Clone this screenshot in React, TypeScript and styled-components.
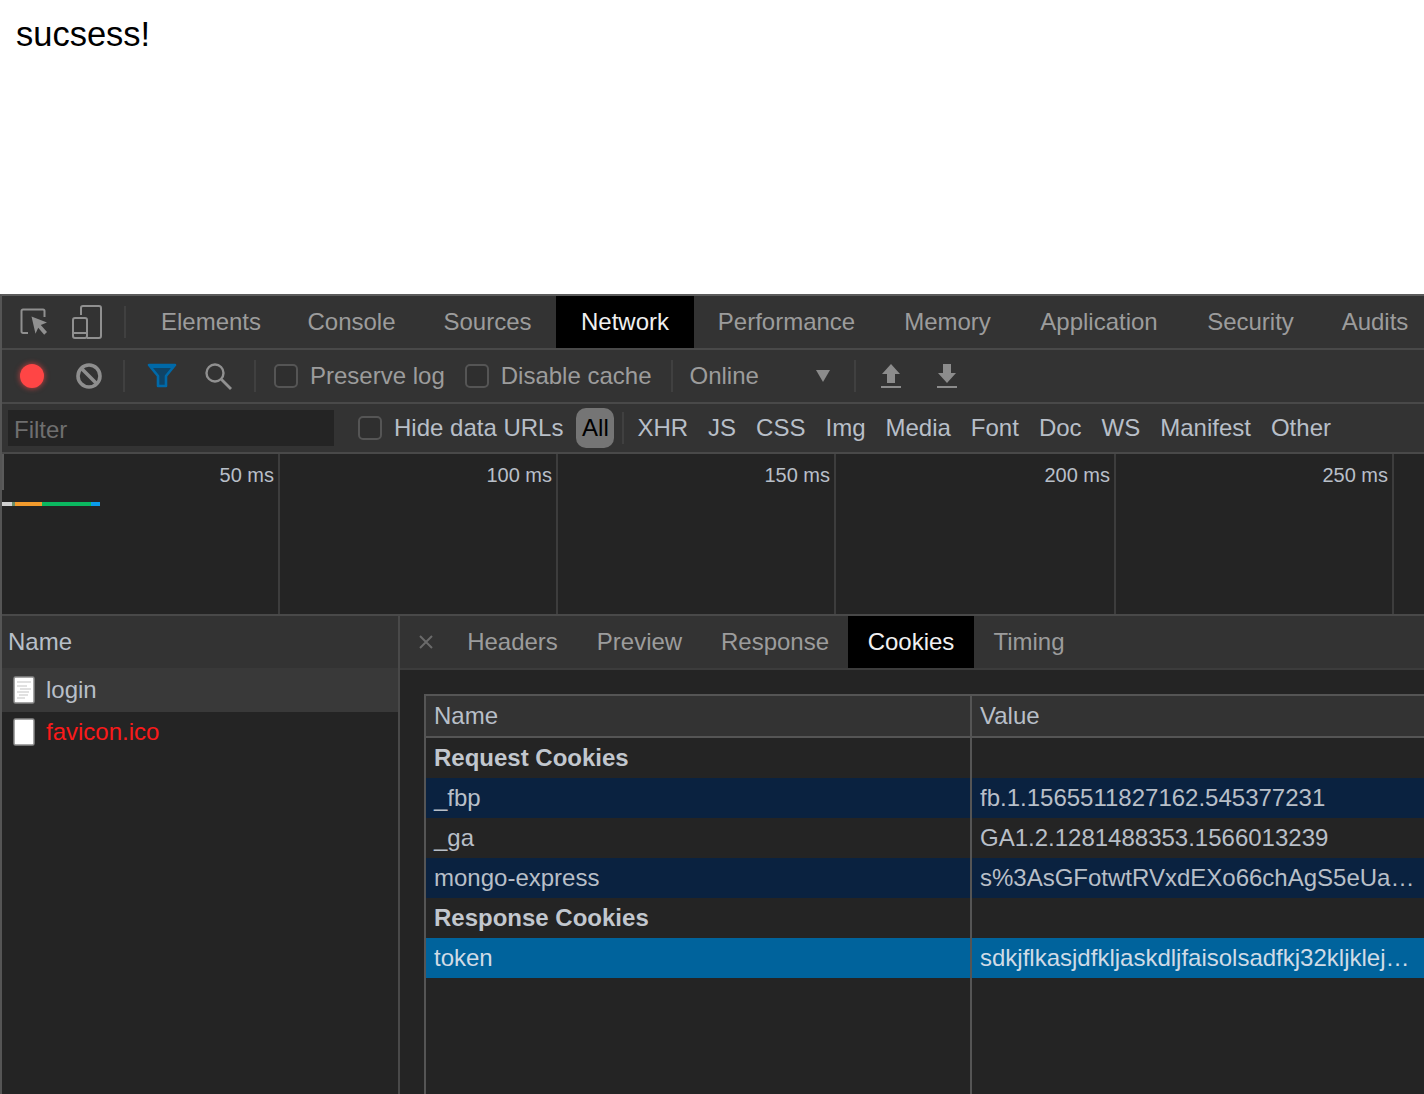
import React from 'react';
import styled, { createGlobalStyle } from 'styled-components';

const GlobalStyle = createGlobalStyle`
  html, body {
    margin: 0;
    height: 1094px;
    overflow: hidden;
    background: #fff;
    font-family: "Liberation Sans", Arial, sans-serif;
  }
  * { box-sizing: border-box; }
`;

const topTabs = [
  { label: 'Elements', width: 146 },
  { label: 'Console', width: 135 },
  { label: 'Sources', width: 137 },
  { label: 'Network', width: 138 },
  { label: 'Performance', width: 185 },
  { label: 'Memory', width: 137 },
  { label: 'Application', width: 166 },
  { label: 'Security', width: 137 },
  { label: 'Audits', width: 112 },
];
const filterTypes = ['XHR', 'JS', 'CSS', 'Img', 'Media', 'Font', 'Doc', 'WS', 'Manifest', 'Other'];
const gridMarks = [
  { label: '50 ms', width: 278 },
  { label: '100 ms', width: 278 },
  { label: '150 ms', width: 278 },
  { label: '200 ms', width: 280 },
  { label: '250 ms', width: 278 },
];
const barParts = [
  { color: '#d0d0d0', width: 10 },
  { color: '#6b8f6b', width: 3 },
  { color: '#f29b2d', width: 27 },
  { color: '#0bb860', width: 49 },
  { color: '#0a9bea', width: 9 },
];
const detailTabs = [
  { label: 'Headers', width: 129 },
  { label: 'Preview', width: 125 },
  { label: 'Response', width: 146 },
  { label: 'Cookies', width: 126 },
  { label: 'Timing', width: 110 },
];
const cookieRows = [
  { name: 'Request Cookies', value: '', kind: 'group' },
  { name: '_fbp', value: 'fb.1.1565511827162.545377231', kind: 'dim' },
  { name: '_ga', value: 'GA1.2.1281488353.1566013239', kind: 'plain' },
  { name: 'mongo-express', value: 's%3AsGFotwtRVxdEXo66chAgS5eUa9xkQm2LpTz7vNc4', kind: 'dim' },
  { name: 'Response Cookies', value: '', kind: 'group' },
  { name: 'token', value: 'sdkjflkasjdfkljaskdljfaisolsadfkj32kljklejwlkqjel', kind: 'selected' },
];

const Page = styled.div`
  height: 1094px;
  display: flex;
  flex-direction: column;
`;

const Greeting = styled.div`
  height: 294px;
  padding: 14px 16px 0;
  font-size: 34.5px;
  line-height: 40px;
  color: #000;
`;

const DevTools = styled.div`
  flex: 1;
  min-height: 0;
  display: flex;
  flex-direction: column;
  background: #242424;
  border-top: 2px solid #5c5c5c;
  border-left: 2px solid #555;
  font-size: 24px;
  color: #b8bfc8;
  overflow: hidden;
`;

const TabBar = styled.div`
  height: 54px;
  flex: none;
  display: flex;
  background: #333;
  border-bottom: 2px solid #494949;
`;

const ToolIcons = styled.div`
  width: 136px;
  flex: none;
  display: flex;
  align-items: center;
  padding-left: 18px;
`;

const Separator = styled.span<{ $left?: number }>`
  width: 2px;
  height: 32px;
  flex: none;
  background: #404040;
  margin-left: ${(p) => p.$left ?? 0}px;
`;

const Tab = styled.div<{ $active?: boolean; $width: number }>`
  width: ${(p) => p.$width}px;
  height: 52px;
  flex: none;
  line-height: 52px;
  text-align: center;
  white-space: nowrap;
  background: ${(p) => (p.$active ? '#000' : 'transparent')};
  color: ${(p) => (p.$active ? '#f0f0f0' : '#9c9c9c')};
`;

const Toolbar = styled.div`
  height: 54px;
  flex: none;
  display: flex;
  align-items: center;
  background: #333;
  border-bottom: 2px solid #494949;
`;

const RecordDot = styled.span`
  width: 24px;
  height: 24px;
  flex: none;
  margin-left: 18px;
  border-radius: 50%;
  background: #ff4545;
  box-shadow: 0 0 5px 1px rgba(255, 70, 70, 0.55);
`;

const Checkbox = styled.span<{ $left: number }>`
  width: 24px;
  height: 24px;
  flex: none;
  margin-left: ${(p) => p.$left}px;
  margin-right: 12px;
  border: 2px solid #555;
  border-radius: 5px;
  background: #2f2f2f;
`;

const ToolLabel = styled.span<{ $bright?: boolean }>`
  white-space: nowrap;
  color: ${(p) => (p.$bright ? '#b8bfc8' : '#9c9c9c')};
`;

const ThrottleSelect = styled.span`
  width: 141px;
  flex: none;
  display: flex;
  align-items: center;
  justify-content: space-between;
  margin-left: 16px;
  color: #9c9c9c;
`;

const FilterRow = styled.div`
  height: 50px;
  flex: none;
  display: flex;
  align-items: center;
  padding-left: 6px;
  background: #333;
  border-bottom: 2px solid #494949;
`;

const FilterInput = styled.div`
  width: 326px;
  height: 36px;
  flex: none;
  padding-left: 6px;
  line-height: 40px;
  background: #242424;
  color: #6f6f6f;
`;

const AllPill = styled.span`
  width: 38px;
  height: 40px;
  flex: none;
  margin-left: 13px;
  margin-right: 8px;
  border-radius: 10px;
  background: #757575;
  color: #000;
  text-align: center;
  line-height: 40px;
`;

const FilterTypes = styled.div`
  display: flex;
  gap: 20px;
  margin-left: 13px;
  color: #b8bfc8;
`;

const Timeline = styled.div`
  height: 162px;
  flex: none;
  border-bottom: 2px solid #494949;
  position: relative;
  display: flex;
`;

const GridColumn = styled.div<{ $width: number }>`
  width: ${(p) => p.$width}px;
  flex: none;
  height: 160px;
  padding: 9px 4px 0 0;
  border-right: 2px solid #3d3d3d;
  text-align: right;
  font-size: 20px;
  line-height: 24px;
  color: #b8bfc8;
`;

const ScrubHandle = styled.span`
  position: absolute;
  left: 0;
  top: 0;
  width: 2px;
  height: 36px;
  background: #5a5a5a;
`;

const TimingBar = styled.div`
  position: absolute;
  left: 0;
  top: 48px;
  display: flex;
  height: 4px;
`;

const BarPart = styled.span<{ $color: string; $width: number }>`
  width: ${(p) => p.$width}px;
  background: ${(p) => p.$color};
`;

const Split = styled.div`
  flex: 1;
  min-height: 0;
  display: flex;
`;

const NamePanel = styled.div`
  width: 398px;
  flex: none;
  border-right: 2px solid #494949;
`;

const NameHeader = styled.div`
  height: 52px;
  padding-left: 6px;
  line-height: 52px;
  background: #333;
`;

const RequestRow = styled.div<{ $selected?: boolean; $failed?: boolean }>`
  height: ${(p) => (p.$selected ? 44 : 40)}px;
  display: flex;
  align-items: center;
  gap: 11px;
  padding-left: 11px;
  background: ${(p) => (p.$selected ? '#393939' : 'transparent')};
  color: ${(p) => (p.$failed ? '#fb1a1a' : '#b8bfc8')};
`;

const DetailPanel = styled.div`
  flex: 1;
  min-width: 0;
  display: flex;
  flex-direction: column;
`;

const DetailTabs = styled.div`
  height: 54px;
  flex: none;
  display: flex;
  align-items: flex-start;
  background: #333;
  border-bottom: 2px solid #3c3c3c;
`;

const CloseMark = styled.span`
  width: 48px;
  height: 52px;
  flex: none;
  display: flex;
  align-items: center;
  padding-left: 19px;
`;

const DetailTab = styled.div<{ $active?: boolean; $width: number }>`
  width: ${(p) => p.$width}px;
  height: 52px;
  flex: none;
  line-height: 52px;
  text-align: center;
  background: ${(p) => (p.$active ? '#000' : 'transparent')};
  color: ${(p) => (p.$active ? '#f0f0f0' : '#9c9c9c')};
`;

const TableWrap = styled.div`
  flex: 1;
  min-height: 0;
  padding: 24px 0 0 24px;
`;

const CookieTable = styled.div`
  height: 100%;
  border-top: 2px solid #555;
  border-left: 2px solid #555;
  display: flex;
  flex-direction: column;
`;

const HeaderRow = styled.div`
  height: 42px;
  flex: none;
  display: grid;
  grid-template-columns: 546px 1fr;
  background: #333;
  border-bottom: 2px solid #555;
  line-height: 40px;
`;

const CookieRow = styled.div<{ $kind: string }>`
  height: 40px;
  flex: none;
  display: grid;
  grid-template-columns: 546px 1fr;
  line-height: 40px;
  font-weight: ${(p) => (p.$kind === 'group' ? 700 : 400)};
  background: ${(p) =>
    p.$kind === 'dim' ? '#0a2240' : p.$kind === 'selected' ? '#00639c' : 'transparent'};
  color: ${(p) => (p.$kind === 'selected' ? '#d0dbe6' : p.$kind === 'group' ? '#c2c7ce' : '#b8bfc8')};
`;

const NameCell = styled.div`
  padding-left: 8px;
  white-space: nowrap;
  border-right: 2px solid #555;
  overflow: hidden;
`;

const ValueCell = styled.div`
  min-width: 0;
  padding: 0 8px;
  white-space: nowrap;
  overflow: hidden;
  text-overflow: ellipsis;
`;

const TableFiller = styled.div`
  flex: 1;
  width: 546px;
  border-right: 2px solid #555;
`;

const Inspector = () => (
  <svg width="30" height="28" viewBox="0 0 30 28" fill="none">
    <path d="M8 25H3a1.500 1.500 0 0 1-1.500-1.500V3A1.500 1.500 0 0 1 3 1.500h20A1.500 1.500 0 0 1 24.500 3v6" stroke="#909090" strokeWidth="2" />
    <path d="M11.500 8.500 27 14.500l-6.200 2.600 6.200 7-2.800 2.600-6-7-2.700 6z" fill="#909090" />
  </svg>
);

const DeviceToggle = () => (
  <svg width="30" height="34" viewBox="0 0 30 34" fill="none" style={{ marginLeft: 22 }}>
    <path d="M9 10V3a2 2 0 0 1 2-2h16a2 2 0 0 1 2 2v28a2 2 0 0 1-2 2H15" stroke="#909090" strokeWidth="2" />
    <rect x="1" y="13" width="14" height="20" rx="2" stroke="#909090" strokeWidth="2" />
    <path d="M1 28h14" stroke="#909090" strokeWidth="2" />
  </svg>
);

const ClearIcon = () => (
  <svg width="28" height="28" viewBox="0 0 28 28" fill="none" style={{ marginLeft: 31 }}>
    <circle cx="14" cy="14" r="11" stroke="#8e8e8e" strokeWidth="3.600" />
    <path d="M6.500 6.500 21.500 21.500" stroke="#8e8e8e" strokeWidth="3.600" />
  </svg>
);

const FunnelIcon = () => (
  <svg width="30" height="26" viewBox="0 0 30 26" fill="none" style={{ marginLeft: 22 }}>
    <path d="M2 2h26l-9 11v10h-8V13z" fill="#0f4467" stroke="#0069a8" strokeWidth="2.600" strokeLinejoin="round" />
    <path d="M2 2h26l-2.500 3h-21z" fill="#0069a8" />
  </svg>
);

const SearchIcon = () => (
  <svg width="30" height="30" viewBox="0 0 30 30" fill="none" style={{ marginLeft: 26 }}>
    <circle cx="12" cy="12" r="8.500" stroke="#909090" strokeWidth="2.400" />
    <path d="M18.500 18.500 28 28" stroke="#909090" strokeWidth="2.800" />
  </svg>
);

const SelectArrow = () => (
  <svg width="14" height="12" viewBox="0 0 14 12">
    <path d="M0 0h14L7 12z" fill="#8c8c8c" />
  </svg>
);

const UploadIcon = () => (
  <svg width="20" height="26" viewBox="0 0 20 26" style={{ marginLeft: 25 }}>
    <path d="M10 1 19 11H14V20H6V11H1z" fill="#8c8c8c" />
    <path d="M0 23h20v2H0z" fill="#8c8c8c" />
  </svg>
);

const DownloadIcon = () => (
  <svg width="20" height="26" viewBox="0 0 20 26" style={{ marginLeft: 36 }}>
    <path d="M6 1h8V10H19L10 20 1 10H6z" fill="#8c8c8c" />
    <path d="M0 23h20v2H0z" fill="#8c8c8c" />
  </svg>
);

const FileIcon = ({ lines }: { lines?: boolean }) => (
  <svg width="22" height="28" viewBox="0 0 22 28">
    <rect x="1" y="1" width="20" height="26" rx="1.500" fill="#fff" stroke="#8a8a8a" strokeWidth="1.500" />
    {lines && <path d="M4 6h14M4 10h10M7 13h11M4 16h12M6 19h9M4 22h8" stroke="#d8d8d8" strokeWidth="1.500" />}
  </svg>
);

const CloseIcon = () => (
  <svg width="14" height="14" viewBox="0 0 14 14">
    <path d="M1 1l12 12M13 1 1 13" stroke="#6a6a6a" strokeWidth="2" />
  </svg>
);

const App: React.FC = () => (
  <Page>
    <GlobalStyle />
    <Greeting>sucsess!</Greeting>
    <DevTools>
      <TabBar>
        <ToolIcons>
          <Inspector />
          <DeviceToggle />
          <Separator $left={22} />
        </ToolIcons>
        {topTabs.map((t) => (
          <Tab key={t.label} $width={t.width} $active={t.label === 'Network'}>{t.label}</Tab>
        ))}
      </TabBar>
      <Toolbar>
        <RecordDot />
        <ClearIcon />
        <Separator $left={20} />
        <FunnelIcon />
        <SearchIcon />
        <Separator $left={21} />
        <Checkbox $left={18} />
        <ToolLabel>Preserve log</ToolLabel>
        <Checkbox $left={20} />
        <ToolLabel>Disable cache</ToolLabel>
        <Separator $left={20} />
        <ThrottleSelect>
          Online
          <SelectArrow />
        </ThrottleSelect>
        <Separator $left={24} />
        <UploadIcon />
        <DownloadIcon />
      </Toolbar>
      <FilterRow>
        <FilterInput>Filter</FilterInput>
        <Checkbox $left={24} />
        <ToolLabel $bright>Hide data URLs</ToolLabel>
        <AllPill>All</AllPill>
        <Separator />
        <FilterTypes>
          {filterTypes.map((f) => (
            <span key={f}>{f}</span>
          ))}
        </FilterTypes>
      </FilterRow>
      <Timeline>
        {gridMarks.map((m) => (
          <GridColumn key={m.label} $width={m.width}>{m.label}</GridColumn>
        ))}
        <ScrubHandle />
        <TimingBar>
          {barParts.map((b) => (
            <BarPart key={b.color} $color={b.color} $width={b.width} />
          ))}
        </TimingBar>
      </Timeline>
      <Split>
        <NamePanel>
          <NameHeader>Name</NameHeader>
          <RequestRow $selected>
            <FileIcon lines />
            login
          </RequestRow>
          <RequestRow $failed>
            <FileIcon />
            favicon.ico
          </RequestRow>
        </NamePanel>
        <DetailPanel>
          <DetailTabs>
            <CloseMark>
              <CloseIcon />
            </CloseMark>
            {detailTabs.map((t) => (
              <DetailTab key={t.label} $width={t.width} $active={t.label === 'Cookies'}>{t.label}</DetailTab>
            ))}
          </DetailTabs>
          <TableWrap>
            <CookieTable>
              <HeaderRow>
                <NameCell>Name</NameCell>
                <ValueCell>Value</ValueCell>
              </HeaderRow>
              {cookieRows.map((r) => (
                <CookieRow key={r.name} $kind={r.kind}>
                  <NameCell>{r.name}</NameCell>
                  <ValueCell>{r.value}</ValueCell>
                </CookieRow>
              ))}
              <TableFiller />
            </CookieTable>
          </TableWrap>
        </DetailPanel>
      </Split>
    </DevTools>
  </Page>
);

export default App;
